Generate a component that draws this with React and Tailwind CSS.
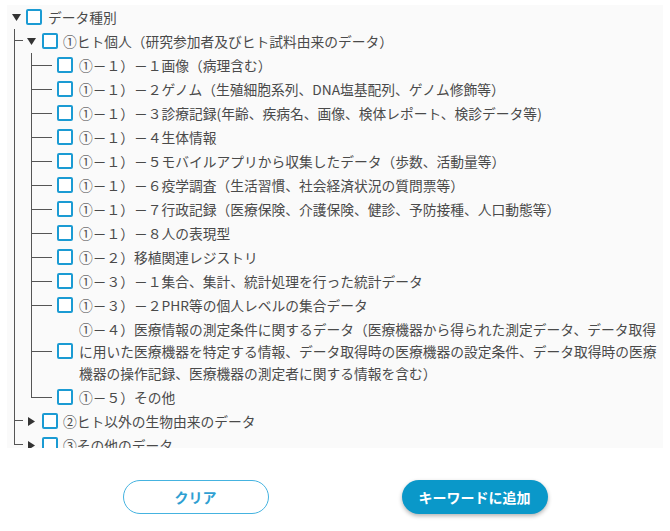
import React from "react";

// tree data for the category picker
const tree = {
  label: "データ種別",
  open: true,
  children: [
    {
      label: "①ヒト個人（研究参加者及びヒト試料由来のデータ）",
      open: true,
      children: [
        { label: "①－１）－１画像（病理含む）" },
        { label: "①－１）－２ゲノム（生殖細胞系列、DNA塩基配列、ゲノム修飾等）" },
        { label: "①－１）－３診療記録(年齢、疾病名、画像、検体レポート、検診データ等)" },
        { label: "①－１）－４生体情報" },
        { label: "①－１）－５モバイルアプリから収集したデータ（歩数、活動量等）" },
        { label: "①－１）－６疫学調査（生活習慣、社会経済状況の質問票等）" },
        { label: "①－１）－７行政記録（医療保険、介護保険、健診、予防接種、人口動態等）" },
        { label: "①－１）－８人の表現型" },
        { label: "①－２）移植関連レジストリ" },
        { label: "①－３）－１集合、集計、統計処理を行った統計データ" },
        { label: "①－３）－２PHR等の個人レベルの集合データ" },
        {
          label:
            "①－４）医療情報の測定条件に関するデータ（医療機器から得られた測定データ、データ取得に用いた医療機器を特定する情報、データ取得時の医療機器の設定条件、データ取得時の医療機器の操作記録、医療機器の測定者に関する情報を含む）",
        },
        { label: "①－５）その他" },
      ],
    },
    { label: "②ヒト以外の生物由来のデータ", open: false, children: [] },
    { label: "③その他のデータ", open: false, children: [] },
  ],
};

const Caret = ({ open }) => (
  <span className="w-[10px] h-[24px] flex items-center justify-center shrink-0">
    {open ? (
      <svg width="9" height="7" viewBox="0 0 9 7">
        <path d="M0 0h9L4.5 7z" fill="#333" />
      </svg>
    ) : (
      <svg width="7" height="9" viewBox="0 0 7 9">
        <path d="M0 0l7 4.5L0 9z" fill="#333" />
      </svg>
    )}
  </span>
);

const Box = () => (
  <span className="block w-[16px] h-[16px] shrink-0 border-2 border-[#1b9bd3] rounded-[2px] bg-white" />
);

// connector column: ├ or └ drawn with borders
const Connector = ({ width, last }) => (
  <div className={`flex flex-col shrink-0 ${width}`}>
    <div className="h-[12px] border-l border-b border-[#555] shrink-0" />
    <div className={`flex-1 ${last ? "" : "border-l border-[#555]"}`} />
  </div>
);

const LeafItem = ({ node, last }) => (
  <div className="flex">
    <div className="flex flex-col shrink-0 w-[21px]">
      <div className="flex-1 border-l border-b border-[#555]" />
      <div className={`flex-1 ${last ? "" : "border-l border-[#555]"}`} />
    </div>
    <div className="flex items-center ml-[5px] min-h-[24px] py-[1px]">
      <Box />
      <span className="ml-[6px] leading-[22px]">{node.label}</span>
    </div>
  </div>
);

const GroupItem = ({ node, last }) => (
  <div className="flex">
    <Connector width="w-[9px]" last={last} />
    <div className="flex flex-col">
      <div className="flex items-center h-[24px]">
        <span className="ml-[3px]">
          <Caret open={node.open} />
        </span>
        <span className="ml-[6px]">
          <Box />
        </span>
        <span className="ml-[5px] whitespace-nowrap">{node.label}</span>
      </div>
      {node.open && (
        <div className="ml-[8px] flex flex-col">
          {node.children.map((c, i) => (
            <LeafItem key={i} node={c} last={i === node.children.length - 1} />
          ))}
        </div>
      )}
    </div>
  </div>
);

export default function App() {
  return (
    <div
      className="w-[670px] h-[531px] bg-white text-[13.75px] text-[#4a4a4a]"
      style={{ fontFamily: '"Noto Sans CJK JP", "Noto Sans", sans-serif' }}
    >
      <div className="mx-[7px] mt-[5px] h-[443px] bg-[#fafafa] overflow-hidden pl-[4px] pr-[3px]">
        <div className="flex items-center h-[24px]">
          <Caret open={tree.open} />
          <span className="ml-[5px] flex">
            <Box />
          </span>
          <span className="ml-[6px]">{tree.label}</span>
        </div>
        <div className="ml-[3px] flex flex-col">
          {tree.children.map((c, i) => (
            <GroupItem key={i} node={c} last={i === tree.children.length - 1} />
          ))}
        </div>
      </div>
      <div className="flex justify-center gap-[133px] mt-[32px]">
        <button className="w-[146px] h-[34px] rounded-full border-[1.5px] border-[#45b3e0] bg-white text-[#2f9fd2] font-bold text-[14px]">
          クリア
        </button>
        <button className="w-[146px] h-[34px] rounded-full bg-[#0a98c9] text-white font-bold text-[14px] shadow-[0_2px_4px_rgba(0,0,0,0.3)]">
          キーワードに追加
        </button>
      </div>
    </div>
  );
}
